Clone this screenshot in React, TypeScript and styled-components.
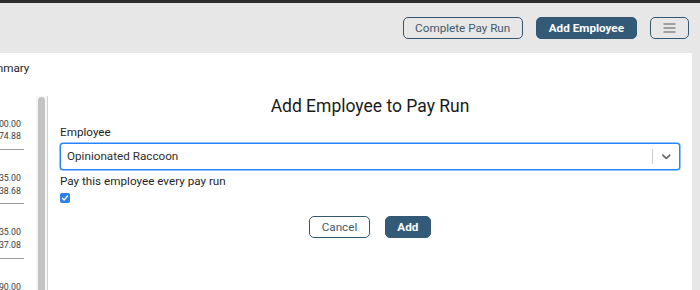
import styled, { createGlobalStyle } from 'styled-components';

type PayGroup = { gross: string; net: string };

const payGroups: PayGroup[] = [
  { gross: '$1,200.00', net: '$974.88' },
  { gross: '$1,435.00', net: '$1,138.68' },
  { gross: '$1,335.00', net: '$1,037.08' },
  { gross: '$1,190.00', net: '$962.40' },
];

export default function App() {
  return (
    <>
      <GlobalStyle />
      <Page>
        <TopStrip />
        <Header>
          <Button>Complete Pay Run</Button>
          <Button $primary>Add Employee</Button>
          <Button $icon aria-label="Menu">
            <svg width="13" height="10" viewBox="0 0 13 10">
              <path d="M0.5 1h12M0.5 5h12M0.5 9h12" stroke="#5a5a5a" strokeWidth="1.2" />
            </svg>
          </Button>
        </Header>
        <Main>
          <Sidebar>
            <SidebarTitle>Summary</SidebarTitle>
            <SidebarBody>
              <GroupList>
                {payGroups.map((group, index) => (
                  <Group key={index}>
                    <span>{group.gross}</span>
                    <span>{group.net}</span>
                  </Group>
                ))}
              </GroupList>
              <Track>
                <Thumb />
              </Track>
            </SidebarBody>
          </Sidebar>
          <Dialog>
            <DialogTitle>Add Employee to Pay Run</DialogTitle>
            <FieldLabel>Employee</FieldLabel>
            <SelectControl>
              <SelectValue>Opinionated Raccoon</SelectValue>
              <IndicatorSeparator />
              <Indicator>
                <svg width="14.6" height="14.6" viewBox="0 0 20 20">
                  <path
                    fill="currentColor"
                    d="M4.516 7.548c0.436-0.446 1.043-0.481 1.576 0l3.908 3.747 3.908-3.747c0.533-0.481 1.141-0.446 1.574 0 0.436 0.445 0.408 1.197 0 1.615-0.406 0.418-4.695 4.502-4.695 4.502-0.217 0.223-0.502 0.335-0.787 0.335s-0.57-0.112-0.789-0.335c0 0-4.287-4.084-4.695-4.502s-0.436-1.17 0-1.615z"
                  />
                </svg>
              </Indicator>
            </SelectControl>
            <CheckLabel>Pay this employee every pay run</CheckLabel>
            <CheckBox>
              <svg width="8" height="8" viewBox="0 0 8 8">
                <path d="M1.4 4.2l1.7 1.8 3.5-4" fill="none" stroke="#fff" strokeWidth="1.3" strokeLinecap="round" strokeLinejoin="round" />
              </svg>
            </CheckBox>
            <Actions>
              <Button>Cancel</Button>
              <Button $primary>Add</Button>
            </Actions>
          </Dialog>
        </Main>
      </Page>
    </>
  );
}

const GlobalStyle = createGlobalStyle`
  html, body {
    margin: 0;
    padding: 0;
  }
  body {
    background: #e7e7e7;
    font-family: Roboto, 'Liberation Sans', sans-serif;
    overflow: hidden;
  }
`;

const Page = styled.div`
  width: 700px;
  height: 290px;
  display: flex;
  flex-direction: column;
`;

const TopStrip = styled.div`
  height: 3px;
  background: #2c2c2c;
`;

const Header = styled.header`
  height: 50px;
  display: flex;
  align-items: center;
  justify-content: flex-end;
  gap: 13.5px;
  padding-right: 11px;
`;

const Button = styled.button<{ $primary?: boolean; $icon?: boolean }>`
  height: 22px;
  padding: 0 ${(props) => (props.$icon ? '12px' : '11.5px')};
  display: flex;
  align-items: center;
  border: 1px solid #33586f;
  border-radius: 5px;
  background: ${(props) => (props.$primary ? '#335b78' : 'transparent')};
  color: ${(props) => (props.$primary ? '#fff' : '#44596b')};
  font-family: Roboto, 'Liberation Sans', sans-serif;
  font-size: 11.7px;
  font-weight: ${(props) => (props.$primary ? 700 : 400)};
  cursor: pointer;
`;

const Main = styled.main`
  flex: 1;
  display: flex;
  margin-right: 8px;
  background: #fff;
  overflow: hidden;
`;

const Sidebar = styled.aside`
  width: 48px;
  flex: none;
  display: flex;
  flex-direction: column;
  overflow: hidden;
`;

const SidebarTitle = styled.h2`
  height: 42.5px;
  box-sizing: border-box;
  margin: 0 0 0 -20.5px;
  padding-top: 8.7px;
  font-size: 11.7px;
  font-weight: 400;
  line-height: 13.7px;
  color: #1f1f1f;
  white-space: nowrap;
`;

const SidebarBody = styled.div`
  flex: 1;
  display: flex;
  min-height: 0;
  border-right: 1px solid #d2d2d2;
`;

const GroupList = styled.div`
  width: 36px;
  flex: none;
  overflow: hidden;
`;

const Group = styled.div`
  width: 24px;
  box-sizing: border-box;
  display: flex;
  flex-direction: column;
  align-items: flex-end;
  padding: 22px 3px 6px 0;
  border-bottom: 1px solid #9c9c9c;
  font-size: 8.8px;
  line-height: 12.7px;
  color: #3c3c3c;
  white-space: nowrap;
`;

const Track = styled.div`
  width: 11px;
  flex: none;
  display: flex;
  flex-direction: column;
  padding-top: 1.5px;
  box-sizing: border-box;
  background: #f6f6f6;
`;

const Thumb = styled.div`
  flex: 1;
  width: 7.5px;
  margin-left: 1.5px;
  border-radius: 4px 4px 0 0;
  background: #c3c3c3;
`;

const Dialog = styled.section`
  flex: 1;
  display: flex;
  flex-direction: column;
  align-items: flex-start;
  padding: 42.5px 12px 0;
`;

const DialogTitle = styled.h1`
  align-self: stretch;
  margin: 0;
  font-size: 17.5px;
  font-weight: 400;
  line-height: 20.5px;
  text-align: center;
  color: #1a1a1a;
`;

const FieldLabel = styled.label`
  margin-top: 10px;
  font-size: 11.7px;
  line-height: 13.7px;
  color: #1f1f1f;
`;

const SelectControl = styled.div`
  align-self: stretch;
  display: flex;
  align-items: center;
  height: 27.8px;
  box-sizing: border-box;
  margin-top: 2.8px;
  border: 1px solid #2684ff;
  box-shadow: 0 0 0 0.5px #2684ff;
  border-radius: 3px;
  background: #fff;
`;

const SelectValue = styled.div`
  flex: 1;
  padding: 0 6px;
  font-size: 11.7px;
  color: #2e2e2e;
`;

const IndicatorSeparator = styled.span`
  align-self: stretch;
  width: 1px;
  margin: 5.8px 0;
  background: #ccc;
`;

const Indicator = styled.span`
  display: flex;
  padding: 0 5.8px;
  color: #666;
`;

const CheckLabel = styled.div`
  margin-top: 5px;
  font-size: 11.7px;
  line-height: 13.7px;
  color: #1f1f1f;
`;

const CheckBox = styled.span`
  width: 9.5px;
  height: 9.5px;
  margin-top: 4.3px;
  display: flex;
  align-items: center;
  justify-content: center;
  border-radius: 2px;
  background: #2d7ff0;
`;

const Actions = styled.div`
  align-self: stretch;
  display: flex;
  justify-content: center;
  gap: 15px;
  margin-top: 13px;
`;
